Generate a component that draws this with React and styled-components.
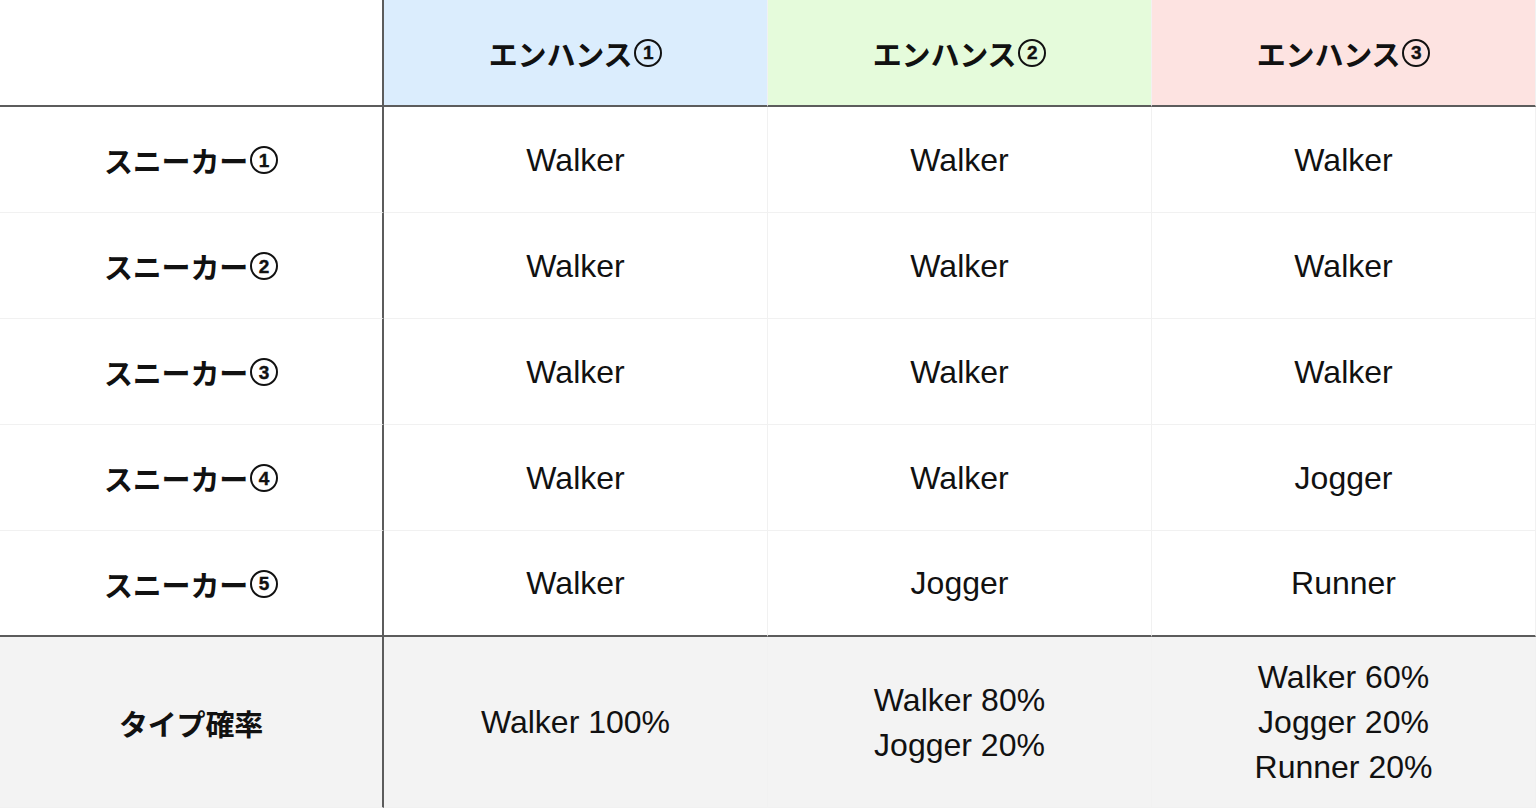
import React from 'react';
import styled, { createGlobalStyle } from 'styled-components';

const GlobalStyle = createGlobalStyle`
  html, body {
    margin: 0;
    padding: 0;
    background: #ffffff;
  }
  * {
    box-sizing: border-box;
  }
`;

const Table = styled.div`
  display: grid;
  grid-template-columns: repeat(4, 384px);
  grid-template-rows: 107px repeat(5, 106px) 171px;
  width: 1536px;
  height: 808px;
  overflow: hidden;
  font-family: "Liberation Sans", "Noto Sans CJK JP", sans-serif;
  color: #111;
`;

const Cell = styled.div`
  display: flex;
  flex-direction: column;
  align-items: center;
  justify-content: center;
  padding-top: ${props => props.head ? '0' : '1px'};
  background: ${props => props.bg || '#ffffff'};
  border-right: ${props => props.first ? '2px solid #5c5c5c' : '1px solid #f1f1f1'};
  border-bottom: ${props => props.divider ? '2px solid #5c5c5c' : '1px solid #f1f1f1'};
  font-size: 32px;
  line-height: 45px;
`;

const Label = styled.span`
  display: inline-flex;
  align-items: center;
  font-family: "Noto Sans CJK JP", sans-serif;
  font-weight: 700;
  font-size: 29px;
  line-height: 40px;
  letter-spacing: -0.2px;
`;

const Circled = styled.span`
  display: inline-flex;
  flex: none;
  align-items: center;
  justify-content: center;
  width: 28px;
  height: 28px;
  margin-left: 2px;
  border: 2.5px solid #111;
  border-radius: 50%;
  font-family: "Liberation Sans", sans-serif;
  font-size: 19px;
  font-weight: 700;
  line-height: 1;
  letter-spacing: 0;
  -webkit-text-stroke: 0.4px #111;
`;

const headers = [
  { num: 1, bg: '#dbedfd' },
  { num: 2, bg: '#e5fbdb' },
  { num: 3, bg: '#fde3e1' },
];

const rows = [
  [1, 'Walker', 'Walker', 'Walker'],
  [2, 'Walker', 'Walker', 'Walker'],
  [3, 'Walker', 'Walker', 'Walker'],
  [4, 'Walker', 'Walker', 'Jogger'],
  [5, 'Walker', 'Jogger', 'Runner'],
];

const odds = [
  ['Walker 100%'],
  ['Walker 80%', 'Jogger 20%'],
  ['Walker 60%', 'Jogger 20%', 'Runner 20%'],
];

export default function App() {
  return (
    <>
      <GlobalStyle />
      <Table>
        <Cell first divider head />
        {headers.map(h => (
          <Cell key={h.num} bg={h.bg} divider head>
            <Label>エンハンス<Circled>{h.num}</Circled></Label>
          </Cell>
        ))}

        {rows.map((row, i) => (
          <React.Fragment key={row[0]}>
            <Cell first divider={i === rows.length - 1}>
              <Label>スニーカー<Circled>{row[0]}</Circled></Label>
            </Cell>
            {row.slice(1).map((v, j) => (
              <Cell key={j} divider={i === rows.length - 1}>{v}</Cell>
            ))}
          </React.Fragment>
        ))}

        <Cell first bg="#f3f3f3">
          <Label>タイプ確率</Label>
        </Cell>
        {odds.map((lines, j) => (
          <Cell key={j} bg="#f3f3f3">
            {lines.map(l => <div key={l}>{l}</div>)}
          </Cell>
        ))}
      </Table>
    </>
  );
}
